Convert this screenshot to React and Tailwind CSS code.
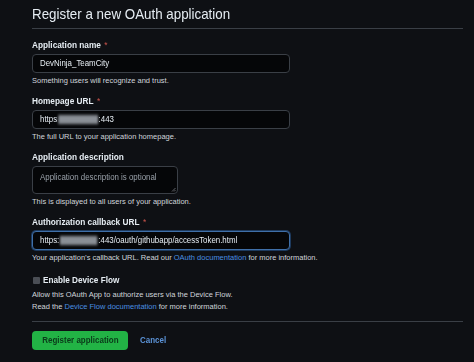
import React from "react";

const font = { fontFamily: '"Liberation Sans", Arial, sans-serif' };

function Blur({ w }) {
  return (
    <span
      className="inline-block h-[9px] bg-[#8a8f96] blur-[1.5px] align-middle mx-[1px]"
      style={{ width: w }}
    />
  );
}

function Label({ children, req }) {
  return (
    <div className="h-[12px] text-[9.5px] leading-[12px] font-bold text-[#e6edf3]">
      <span className="inline-block origin-left scale-x-[0.87] whitespace-nowrap">
        {children}
        {req && <span className="text-[#c9544b] ml-[4px] font-normal">*</span>}
      </span>
    </div>
  );
}

function Help({ children }) {
  return (
    <div className="mt-[3px] text-[7.5px] leading-[10px] text-[#d0d5db] whitespace-nowrap">{children}</div>
  );
}

function Input({ children, focus }) {
  return (
    <div
      className={
        "mt-[3px] w-[258px] h-[19px] rounded-[4px] bg-[#050608] border flex items-center px-[7px] text-[9.5px] text-[#e6edf3] " +
        (focus ? "border-[#3f6fa8] shadow-[0_0_0_1px_#1d3a5e]" : "border-[#3a3f46]")
      }
    >
      <span className="inline-block origin-left scale-x-[0.83] whitespace-nowrap">{children}</span>
    </div>
  );
}

export default function App() {
  return (
    <div className="w-[474px] h-[362px] bg-[#0e1014] pl-[32px] pr-[11px] pt-[2px] overflow-hidden" style={font}>
      <div className="border-b border-[#3a3f46] h-[27px] text-[15px] leading-[24px] text-[#e6edf3]">
        <span className="inline-block origin-left scale-x-[0.89] whitespace-nowrap">
          Register a new OAuth application
        </span>
      </div>

      <div className="mt-[10px]">
        <Label req>Application name</Label>
        <Input>DevNinja_TeamCity</Input>
        <Help>Something users will recognize and trust.</Help>
      </div>

      <div className="mt-[9px]">
        <Label req>Homepage URL</Label>
        <Input>
          https<Blur w={48} />:443
        </Input>
        <Help>The full URL to your application homepage.</Help>
      </div>

      <div className="mt-[9px]">
        <Label>Application description</Label>
        <div className="relative mt-[3px] w-[146px] h-[28px] rounded-[4px] bg-[#050608] border border-[#3a3f46] px-[7px] pt-[4px] text-[9.5px] leading-[12px] text-[#9aa1a9]">
          <span className="inline-block origin-left scale-x-[0.83] whitespace-nowrap">
            Application description is optional
          </span>
          <svg className="absolute right-[1px] bottom-[1px]" width="5" height="5" viewBox="0 0 5 5">
            <path d="M1 4.5 L4.5 1 M3 4.5 L4.5 3" stroke="#8a8f96" strokeWidth="0.7" />
          </svg>
        </div>
        <Help>This is displayed to all users of your application.</Help>
      </div>

      <div className="mt-[9px]">
        <Label req>Authorization callback URL</Label>
        <Input focus>
          https:<Blur w={45} />:443/oauth/githubapp/accessToken.html
        </Input>
        <Help>
          Your application’s callback URL. Read our{" "}
          <span className="text-[#4a8fe0]">OAuth documentation</span> for more information.
        </Help>
      </div>

      <div className="mt-[11px] flex items-center gap-[3px]">
        <div className="w-[7px] h-[7px] rounded-[1px] bg-[#4a4e55] ml-[1px]" />
        <span className="h-[12px] text-[9.5px] leading-[12px] font-bold text-[#e6edf3]">
          <span className="inline-block origin-left scale-x-[0.86] whitespace-nowrap">Enable Device Flow</span>
        </span>
      </div>
      <div className="mt-[3px] text-[7.5px] leading-[12px] text-[#d0d5db]">
        Allow this OAuth App to authorize users via the Device Flow.
      </div>
      <div className="text-[7.5px] leading-[12px] text-[#d0d5db]">
        Read the <span className="text-[#4a8fe0]">Device Flow documentation</span> for more information.
      </div>

      <div className="mt-[8px] border-t border-[#3a3f46]" />

      <div className="mt-[9px] flex items-center gap-[12px]">
        <div className="w-[96px] h-[19px] rounded-[4px] bg-[#22b345] flex items-center justify-center text-[9.5px] font-bold text-[#0b3a1a]">
          <span className="inline-block scale-x-[0.84] whitespace-nowrap">Register application</span>
        </div>
        <span className="text-[9.5px] font-bold text-[#5b93d8]">
          <span className="inline-block origin-left scale-x-[0.84] whitespace-nowrap">Cancel</span>
        </span>
      </div>
    </div>
  );
}
